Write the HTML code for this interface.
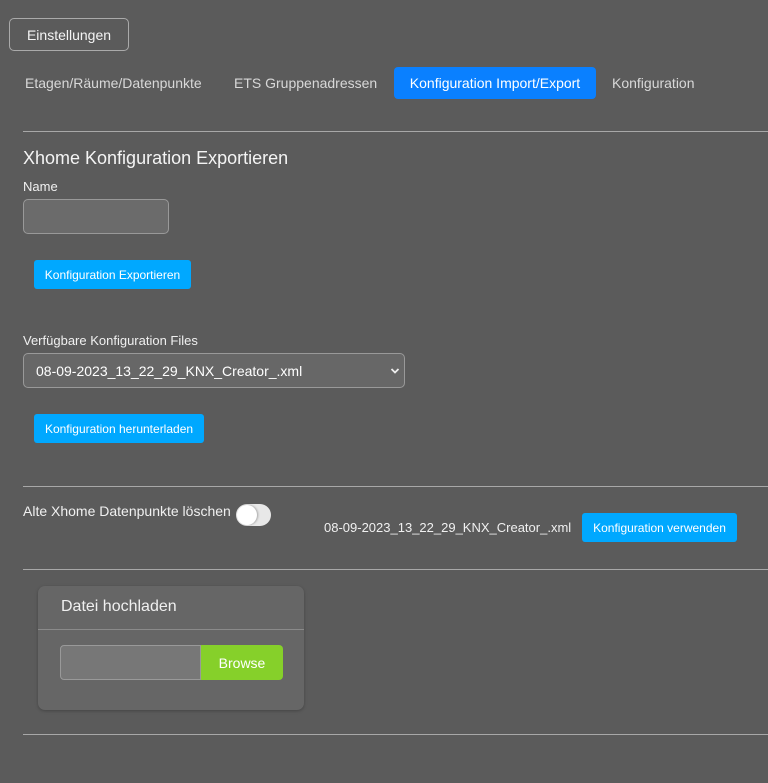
<!DOCTYPE html>
<html><head><meta charset="utf-8"><style>
*{box-sizing:border-box;margin:0;padding:0}
body{width:768px;height:783px;background:#5b5b5b;font-family:"Liberation Sans",Arial,sans-serif;color:#f0f0f0;position:relative;overflow:hidden}
.a{position:absolute}
.hr{position:absolute;left:23px;right:0;height:1px;background:#a8a8a8}
.btn{position:absolute;background:#00a8ff;color:#fff;font-size:12px;border-radius:3px;display:flex;align-items:center;justify-content:center}
.tab{position:absolute;top:67px;height:32px;font-size:14px;color:#d8d8d8;display:flex;align-items:center}
</style></head><body>
<div class="a" style="left:9px;top:18px;width:120px;height:33px;border:1px solid #aaa;border-radius:5px;font-size:14px;display:flex;align-items:center;justify-content:center;color:#f4f4f4">Einstellungen</div>
<div class="tab" style="left:25px">Etagen/Räume/Datenpunkte</div>
<div class="tab" style="left:234px">ETS Gruppenadressen</div>
<div class="tab" style="left:394px;width:202px;background:#0a80ff;border-radius:4px;justify-content:center;color:#fff">Konfiguration Import/Export</div>
<div class="tab" style="left:612px">Konfiguration</div>
<div class="hr" style="top:131px"></div>
<div class="a" style="left:23px;top:148px;font-size:18px;color:#f4f4f4">Xhome Konfiguration Exportieren</div>
<div class="a" style="left:23px;top:179px;font-size:13px">Name</div>
<div class="a" style="left:23px;top:199px;width:146px;height:35px;background:#6b6b6b;border:1px solid #999;border-radius:5px"></div>
<div class="btn" style="left:34px;top:260px;width:157px;height:29px">Konfiguration Exportieren</div>
<div class="a" style="left:23px;top:333px;font-size:13px">Verfügbare Konfiguration Files</div>
<div class="a" style="left:23px;top:353px;width:382px;height:35px;background:#676767;border:1px solid #999;border-radius:5px;font-size:14px;padding:9px 0 0 12px;color:#fff">08-09-2023_13_22_29_KNX_Creator_.xml
<svg class="a" style="right:4px;top:13px" width="10" height="8" viewBox="0 0 10 8"><path d="M1.5 2l3.5 3.5L8.5 2" fill="none" stroke="#eee" stroke-width="1.8"/></svg></div>
<div class="btn" style="left:34px;top:414px;width:170px;height:29px">Konfiguration herunterladen</div>
<div class="hr" style="top:486px"></div>
<div class="a" style="left:23px;top:503px;font-size:14px">Alte Xhome Datenpunkte löschen</div>
<div class="a" style="left:236px;top:504px;width:35px;height:22px;background:#e8e8e8;border-radius:11px"></div>
<div class="a" style="left:237px;top:505px;width:20px;height:20px;background:#fff;border-radius:50%;box-shadow:1px 0 2px rgba(0,0,0,.3)"></div>
<div class="a" style="left:324px;top:520px;font-size:13px">08-09-2023_13_22_29_KNX_Creator_.xml</div>
<div class="btn" style="left:582px;top:513px;width:155px;height:29px">Konfiguration verwenden</div>
<div class="hr" style="top:569px"></div>
<div class="a" style="left:38px;top:586px;width:266px;height:124px;background:#666;border-radius:7px;box-shadow:0 1px 3px rgba(0,0,0,.25)">
<div class="a" style="left:23px;top:12px;font-size:16px;color:#f0f0f0">Datei hochladen</div>
<div class="a" style="left:0;right:0;top:43px;height:1px;background:#8a8a8a"></div>
<div class="a" style="left:22px;top:59px;width:141px;height:35px;background:#777;border:1px solid #999;border-radius:4px 0 0 4px"></div>
<div class="a" style="left:163px;top:59px;width:82px;height:35px;background:#86d02a;border-radius:0 4px 4px 0;font-size:14px;color:#fff;display:flex;align-items:center;justify-content:center">Browse</div>
</div>
<div class="hr" style="top:734px"></div>
</body></html>
